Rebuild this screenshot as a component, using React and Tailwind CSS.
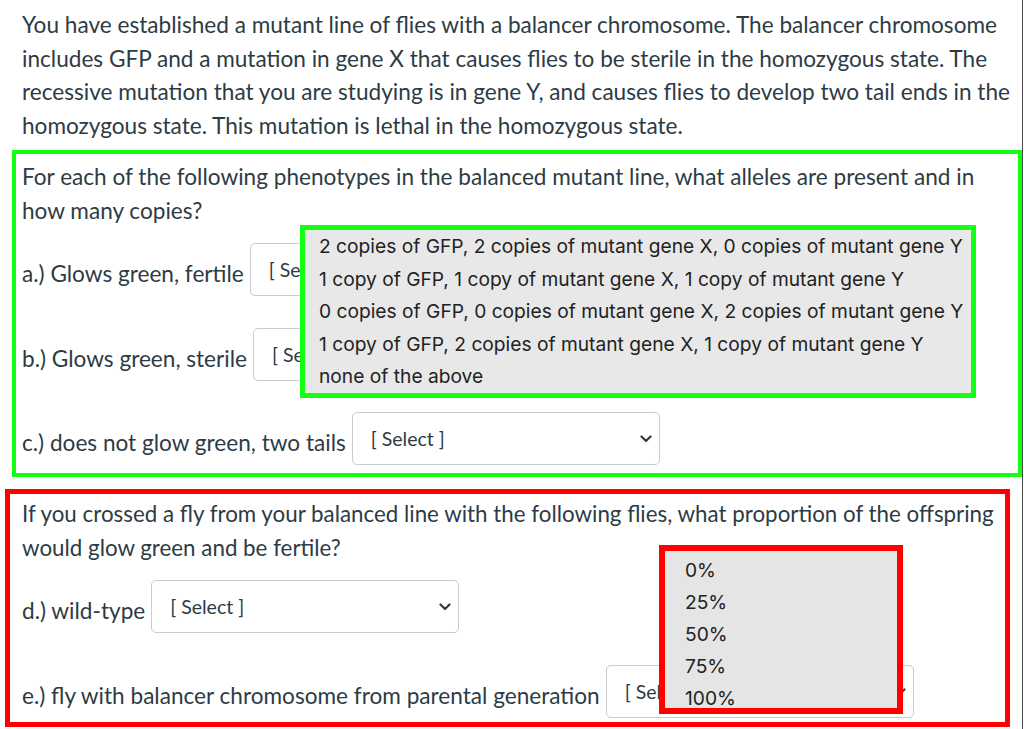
import React from "react";

const lato = { fontFamily: "Lato, 'Open Sans', sans-serif" };

function Chevron() {
  return (
    <svg width="12" height="8" viewBox="0 0 12 8" className="shrink-0">
      <path d="M1.5 1.5 L6 6 L10.5 1.5" fill="none" stroke="#2d3b45" strokeWidth="2.2" strokeLinecap="round" strokeLinejoin="round" />
    </svg>
  );
}

function Select() {
  return (
    <div className="flex h-[53px] w-[308px] shrink-0 items-center justify-between rounded-[5px] border border-[#c7cdd1] bg-white pl-[18px] pr-[7px]">
      <span className="text-[19.5px] text-[#2d3b45] mt-[1px]">[ Select ]</span>
      <Chevron />
    </div>
  );
}

function Row({ label, className = "" }) {
  return (
    <div className={"flex items-center gap-[6px] " + className}>
      <span className="pt-[8px] text-[22.6px] leading-[33.5px] whitespace-nowrap">{label}</span>
      <Select />
    </div>
  );
}

export default function App() {
  const geneOptions = [
    "2 copies of GFP, 2 copies of mutant gene X, 0 copies of mutant gene Y",
    "1 copy of GFP, 1 copy of mutant gene X, 1 copy of mutant gene Y",
    "0 copies of GFP, 0 copies of mutant gene X, 2 copies of mutant gene Y",
    "1 copy of GFP, 2 copies of mutant gene X, 1 copy of mutant gene Y",
    "none of the above",
  ];
  const pctOptions = ["0%", "25%", "50%", "75%", "100%"];
  return (
    <div className="relative h-[729px] w-[1023px] overflow-hidden border-r border-[#4a4a4a] bg-white text-[#2d3b45]" style={lato}>
      <p className="pl-[22px] pr-[12px] pt-[8px] text-[22.6px] leading-[33.5px]">
        You have established a mutant line of flies with a balancer chromosome. The balancer chromosome includes GFP and a mutation in gene X that causes flies to be sterile in the homozygous state. The recessive mutation that you are studying is in gene Y, and causes flies to develop two tail ends in the homozygous state. This mutation is lethal in the homozygous state.
      </p>

      <div className="ml-[12px] mt-[8px] h-[327px] w-[1010px] border-[4px] border-[#14ff14] pl-[6px] pt-[6px]">
        <p className="text-[22.6px] leading-[33.5px] pr-[20px]">
          For each of the following phenotypes in the balanced mutant line, what alleles are present and in how many copies?
        </p>
        <Row label="a.) Glows green, fertile" className="mt-[16px]" />
        <Row label="b.) Glows green, sterile" className="mt-[32px]" />
        <Row label="c.) does not glow green, two tails" className="mt-[31px]" />
      </div>

      <div className="ml-[5px] mt-[12px] h-[238px] w-[1005px] border-[5px] border-[#ff0000] pl-[12px] pt-[3px]">
        <p className="text-[22.35px] leading-[33.5px] whitespace-nowrap">
          If you crossed a fly from your balanced line with the following flies, what proportion of the offspring
          <br />
          would glow green and be fertile?
        </p>
        <Row label="d.) wild-type" className="mt-[16px]" />
        <Row label="e.) fly with balancer chromosome from parental generation" className="mt-[32px]" />
      </div>

      <div
        className="absolute left-[300px] top-[225px] h-[173px] w-[676px] border-[5px] border-[#14ff14] bg-[#e8e8e8] pl-[14px] text-[19.2px] leading-[32.6px] text-[#222]"
        style={{ fontFamily: "Inter, 'Liberation Sans', sans-serif" }}
      >
        {geneOptions.map((o) => (
          <div key={o} className="whitespace-nowrap">{o}</div>
        ))}
      </div>

      <div
        className="absolute left-[659px] top-[545px] h-[169px] w-[244px] overflow-hidden border-[6px] border-[#ff0000] bg-[#e4e5e4] pl-[20px] pt-[3px] text-[19.2px] leading-[32px] text-[#222]"
        style={{ fontFamily: "Inter, 'Liberation Sans', sans-serif" }}
      >
        {pctOptions.map((o) => (
          <div key={o}>{o}</div>
        ))}
      </div>
    </div>
  );
}
